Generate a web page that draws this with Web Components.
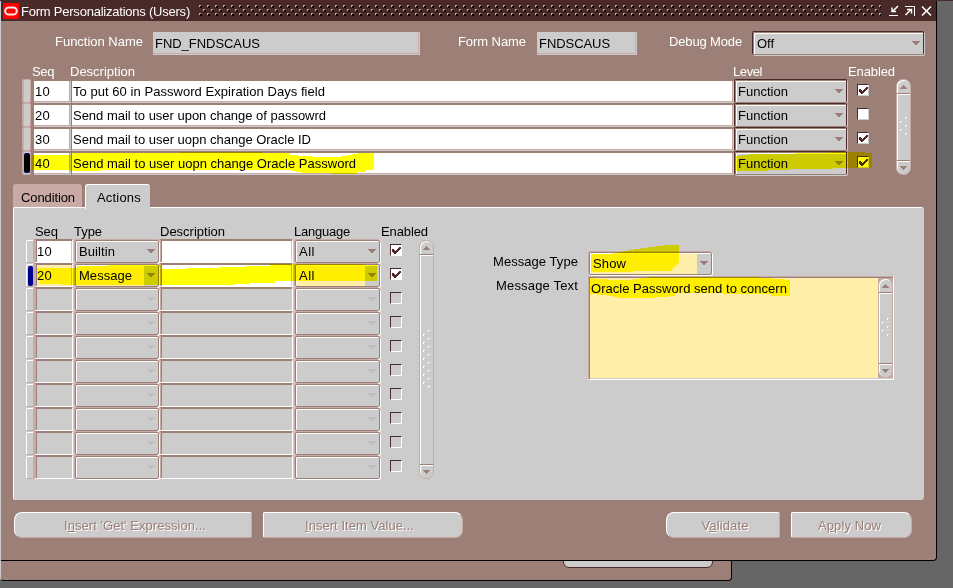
<!DOCTYPE html>
<html lang="en"><head><meta charset="utf-8"><title>Form Personalizations (Users)</title>
<style>html,body{margin:0;width:953px;height:588px;overflow:hidden;background:#666;font:13px/16px "Liberation Sans",Arial,sans-serif;color:#000}</style>
</head><body><personalization-screen></personalization-screen>
<script>
const define=(name,html,setup)=>customElements.define(name,class extends HTMLElement{
  connectedCallback(){
    if(this.shadowRoot)return;
    const root=this.attachShadow({mode:'open'});
    const t=document.createElement('template');
    t.innerHTML=typeof html==='function'?html(this):html;
    root.append(t.content.cloneNode(true));
    if(setup)setup(this,root);
  }
});

/* One line of text tracked out to the width given in w */
define('ui-text','<style>:host{display:inline-block;white-space:pre;flex:none}span{display:inline-block}</style><span><slot></slot></span>',(el,root)=>{
  const w=+el.getAttribute('w');
  if(!w)return;
  const s=root.querySelector('span'),n=el.textContent.length;
  s.style.letterSpacing=((w-s.getBoundingClientRect().width)/n)+'px';
  el.style.width=w+'px';
});

define('ui-field',`<style>
:host{display:block;box-sizing:border-box;height:23px;padding:3px 0 0 1px;background:var(--fill,#fff);border:solid #ccc;border-width:0 1px 1px 0;box-shadow:inset -1px -1px #c9aaa5;overflow:hidden}
:host([inset]){height:24px;margin-left:-1px;padding:4px 0 0 1px;border:solid;border-width:1px 1px 1px 2px;border-color:#9c8077 #fff #fff #c9aaa5;box-shadow:inset 1px 1px #9c8077,inset -1px 0 #ccc;}
:host([inset][empty]){--fill:#ccc}
</style><slot></slot>`);

define('ui-select',`<style>
:host{display:block;box-sizing:border-box;position:relative;height:24px;background:#ccc;border:1px solid var(--edge,#4a2a28);border-radius:2px;border-bottom-color:#9c8077;border-right-color:var(--edge,#4a2a28);box-shadow:inset 1px 1px #9c8077,inset 2px 2px #fff,1px 1px #ccc;padding:4px 0 0 3px}
:host([light]){--edge:#9c8077;height:23px;box-shadow:inset 1px 1px #fff,1px 1px #fff,-1px -1px #c9aaa5;padding-top:3px}
:host([filled]){background:linear-gradient(90deg,#ffeea8 calc(100% - 14px),#ccc 0)}
svg{position:absolute;right:3px;top:9px;display:block}:host([light]) svg{top:8px}
path{fill:#9c8077}:host([empty]) path{fill:#bfbfbf}
</style><slot></slot><svg width="8" height="4" shape-rendering="crispEdges"><path d="M0 0H8V1H7V2H6V3H5V4H3V3H2V2H1V1H0Z"/></svg>`);

define('ui-check',`<style>
:host{display:block;box-sizing:border-box;width:12px;height:12px;background:#fff;border:solid #4a2a28;border-width:1px;border-right-color:#ccc;border-bottom-color:#ccc}
:host([inset]){border-right-color:#fff;border-bottom-color:#fff}:host([empty]){background:#ccc}
svg{display:none}:host([on]) svg{display:block}path{fill:#4a2a28}
</style><svg width="10" height="10" shape-rendering="crispEdges"><path d="M1 4H3V5H4V6H5V5H6V4H7V3H8V2H10V4H9V5H8V6H7V7H6V8H5V9H3V8H2V7H1Z"/></svg>`);

define('ui-scroll',`<style>
:host{display:flex;flex-direction:column;justify-content:space-between;box-sizing:border-box;width:15px;background:#ccc;border:1px solid #c9aaa5;border-radius:7px;box-shadow:inset 1px 1px #fff}
.cap{height:13px;display:grid;place-items:center;border-bottom:1px solid #9c8077;box-shadow:0 1px #fff}
.cap:last-child{border:0;border-top:1px solid #9c8077;box-shadow:inset 0 1px #fff}
svg{display:block;margin:auto}path{fill:#9c8077}.w{fill:#fff}.p{fill:#c9aaa5}
</style><div class="cap"><svg width="7" height="4" shape-rendering="crispEdges"><path d="M3 0H4V1H5V2H6V3H7V4H0V3H1V2H2V1H3Z"/></svg></div><div id="g"></div>
<div class="cap"><svg width="7" height="4" shape-rendering="crispEdges"><path d="M0 0H7V1H6V2H5V3H4V4H3V3H2V2H1V1H0Z"/></svg></div>`,(el,root)=>{
  const n=+el.getAttribute('dots')||5;let s='';
  for(let i=0;i<n;i++){const x=i%2?1:6,y=i*4;
    s+=`<rect class="w" x="${x}" y="${y}" width="2" height="1"/><rect class="w" x="${x}" y="${y+1}" width="1" height="1"/><rect class="p" x="${x+1}" y="${y+1}" width="1" height="1"/>`}
  root.querySelector('#g').innerHTML=`<svg width="9" height="${n*4}" shape-rendering="crispEdges">${s}</svg>`;
});

define('row-mark',`<style>
:host{display:block;box-sizing:border-box;width:9px;height:24px;background:#ccc;border:solid #c9aaa5;border-width:1px 1px 1px 2px;border-radius:2px;box-shadow:inset -1px 0 #ccc}
:host([inset]){width:8px;height:23px;border-width:1px;border-color:#fff #c9aaa5 #c9aaa5 #fff}
i{display:none}:host([current]) i{display:block;height:20px;margin:1px 0 1px 1px;background:#00008f;border-radius:2px}
:host([dark]) i{margin-left:0;background:#000;border-top:1px solid #00008f;border-bottom:1px solid #00008f;height:18px}
</style><i></i>`);

define('ui-button',`<style>
:host{display:block;box-sizing:border-box;height:26px;padding-top:5px;text-align:center;background:#ccc;color:#9c8077;border:1px solid;border-color:#fff #c9aaa5 #c9aaa5 #fff;text-shadow:1px 1px #fff}
:host([side=left]){border-radius:8px 2px 2px 8px}:host([side=right]){border-radius:2px 8px 8px 2px}
</style><slot></slot>`);

define('title-bar',`<style>
:host{display:flex;align-items:center;height:20px;background:#4a2a28;color:#fff;padding-left:2px}
.grip{width:682px;height:12px;margin-left:9px;flex:none}.tools{margin-left:8px;display:block;flex:none}.logo{margin-right:2px;flex:none}slot{display:block;padding-top:2px}
</style><svg class="logo" width="16" height="16"><rect width="16" height="16" fill="#f00"/><rect x="2.2" y="4.4" width="11.6" height="7.2" rx="3.6" fill="none" stroke="#fff" stroke-width="2" opacity=".9"/></svg>
<slot></slot><svg class="grip" shape-rendering="crispEdges"><defs><pattern id="dots" width="8" height="8" patternUnits="userSpaceOnUse"><path fill="#000" d="M1 1h2v2H1zM5 5h2v2H5z"/><path fill="#c9aaa5" d="M0 0h2v1H1v1H0zM4 4h2v1H5v1H4z"/></pattern></defs><rect width="682" height="12" fill="url(#dots)"/></svg>
<svg class="tools" width="46" height="14" fill="none" stroke="#fff"><path stroke-width="1.5" d="M9 2L4 7M3 3.5V7.5H7"/><path d="M0 11.5H9"/><path d="M16 2.5H25.5V12"/><path stroke-width="1.5" d="M16.5 11L22 5.5M18 5.5H22.5V9.5"/><path stroke-width="1.6" d="M33 2.5L42 11.5M42 2.5L33 11.5"/></svg>`);

define('form-header',`<style>
:host{display:flex;height:24px;padding:10px 11px 0 55px;color:#fff}ui-text{margin-top:3px}ui-field,ui-select{color:#000;--fill:#ccc;flex:none}ui-field{margin-top:1px;padding-top:4px}ui-select ui-text,ui-field ui-text{margin-top:0}
</style><ui-text w="88">Function Name</ui-text><ui-field style="width:267px;margin-left:10px;padding-left:2px"><ui-text w="105">FND_FNDSCAUS</ui-text></ui-field>
<ui-text w="68" style="margin-left:38px">Form Name</ui-text><ui-field style="width:100px;margin-left:11px;padding-left:2px"><ui-text w="71">FNDSCAUS</ui-text></ui-field>
<ui-text w="73" style="margin-left:32px">Debug Mode</ui-text><ui-select style="width:172px;margin-left:10px"><ui-text w="17" style="margin-left:1px">Off</ui-text></ui-select>`);

const rules=[['10','To put 60 in Password Expiration Days field',252,1],['20','Send mail to user upon change of passowrd',253,0],['30','Send mail to user uopn change Oracle ID',238,1],['40','Send mail to user uopn change Oracle Password',283,1]];
define('rule-table',`<style>
:host{display:block;padding:9px 0 0 22px}.head,.row{display:grid;grid-template-columns:12px 37px 663px 114px 9px 12px}
.head{color:#fff;height:15px;grid-template-columns:10px 38px 663px 115px 60px}.row{height:24px}.main{display:flex}.main ui-scroll{height:96px;margin-left:27px}
ui-field{margin-top:2px;height:22px;padding-top:3px}.d{margin-left:1px}ui-check{margin-top:5px}ui-select{width:113px}
</style><div class="head"><span></span><ui-text w="22">Seq</ui-text><ui-text w="65">Description</ui-text><ui-text w="29">Level</ui-text><ui-text w="47">Enabled</ui-text></div>
<div class="main"><div>${rules.map((r,i)=>`<div class="row"><row-mark ${i==3?'current dark':''}></row-mark><ui-field><ui-text w="15">${r[0]}</ui-text></ui-field><ui-field class="d"><ui-text w="${r[2]}">${r[1]}</ui-text></ui-field><ui-select><ui-text w="50">Function</ui-text></ui-select><span></span><ui-check ${r[3]?'on':''}></ui-check></div>`).join('')}</div><ui-scroll></ui-scroll></div>`);

define('form-tabs',`<style>
:host{display:flex;padding:9px 0 0 13px;gap:3px;height:23px}div{box-sizing:border-box;height:23px;padding:6px 0 0 8px;border-radius:3px 3px 0 0}
.a{width:69px;background:#c9aaa5}.b{position:relative;z-index:1;width:65px;height:25px;background:#ccc;border:solid #fff;border-width:1px 0 0 1px;padding:5px 0 0 11px}
</style><div class="a"><ui-text w="54">Condition</ui-text></div><div class="b"><ui-text w="44">Actions</ui-text></div>`);

define('action-table',`<style>
:host{display:block;padding-top:16px}.head{display:grid;height:15px;grid-template-columns:39px 86px 134px 87px 50px;padding-left:9px}
.main{display:flex}.row{height:24px;display:grid;grid-template-columns:8px 40px 85px 135px 86px 9px 12px}ui-scroll{height:239px;margin:1px 0 0 18px}
ui-select{width:84px;margin:1px 0 0 1px}ui-select.l{width:85px}ui-check{margin-top:5px;margin-left:1px}.s{width:39px;margin-left:0}.d{width:134px;margin-left:0}.cur.s{--fill:#ffeea8}row-mark{margin-top:1px}
</style><div class="head"><ui-text w="23">Seq</ui-text><ui-text w="28">Type</ui-text><ui-text w="65">Description</ui-text><ui-text w="56">Language</ui-text><ui-text w="47">Enabled</ui-text></div>
<div class="main"><div>${Array.from({length:10},(_,i)=>{const e=i>1?'empty':'',f=i==1?'filled':'';return `<div class="row"><row-mark inset ${i==1?'current':''}></row-mark><ui-field inset ${e} class="s ${i==1?'cur':''}">${i<2?`<ui-text w="15">${i?20:10}</ui-text>`:''}</ui-field><ui-select light ${e} ${f}>${i<2?`<ui-text w="${i?53:36}">${i?'Message':'Builtin'}</ui-text>`:''}</ui-select><ui-field inset ${e} class="d"></ui-field><ui-select light class="l" ${e} ${f}>${i<2?'<ui-text w="16">All</ui-text>':''}</ui-select><span></span><ui-check inset ${i<2?'on':'empty'}></ui-check></div>`}).join('')}</div><ui-scroll dots="15"></ui-scroll></div>`);

define('message-form',`<style>
:host{display:grid;grid-template-columns:86px 306px;column-gap:10px;row-gap:1px;padding-top:44px;align-content:start;justify-items:start}
.lab{justify-self:end;margin-top:2px}ui-select{width:123px}ui-select{margin-left:1px}
.area{box-sizing:border-box;width:306px;height:104px;display:flex;justify-content:space-between;background:#ffeea8;border:solid;border-width:1px 1px 1px 1px;border-color:#c9aaa5 #fff #fff #c9aaa5;box-shadow:inset 1px 1px #9c8077,inset 0 -1px #ccc;padding:1px 0}
.area ui-text{margin:3px 0 0 2px}.bar{display:flex;background:#c9aaa5}.bar ui-scroll{height:100px;border-color:#c9aaa5}
</style><ui-text class="lab" w="85">Message Type</ui-text><ui-select light filled><ui-text w="33">Show</ui-text></ui-select>
<ui-text class="lab" w="82">Message Text</ui-text><div class="area"><ui-text w="196">Oracle Password send to concern</ui-text><div class="bar"><ui-scroll></ui-scroll></div></div>`);

/* Marker pen strokes laid over the rows */
define('marker-strokes',`<style>:host{position:absolute;inset:0;mix-blend-mode:multiply;z-index:5;pointer-events:none}svg{display:block}</style>
<svg width="936" height="560" fill="#ff0" shape-rendering="crispEdges"><path d="M32 155H71V153H180V152H262V153H290V155L320 157H340L354 154L362 153H374V170H366V172H357V174H331V173H305L288 170H100V171H70V170H32Z"/>
<path d="M736 156L755 154H795V153H830V152H865V153H872V168H833V169H800L758 171H736Z"/>
<path d="M37 268H77V266H108V265H161V269H188V268H220V267H245V266H270V264H364V265H377V281H294V281H275V283H250V284H235V285H161V285H77V285H61V284H40V279H37Z"/>
<path d="M591 254H610L630 250L658 246L669 245H679V262L670 271H650L615 272H591Z"/>
<path d="M590 278L612 280H630L650 277H760V278H774V279H785V280H790V296H771V294L675 293V296L650 298H621L605 295L590 294Z"/></svg>`);

define('personalization-screen',`<style>
:host{display:block;position:relative;width:953px;height:588px;overflow:hidden;border-top:1px solid #4a2a28;box-sizing:border-box}
.back{position:absolute;left:0;top:500px;width:732px;height:80px;box-sizing:border-box;background:#9c8077;border:1px solid #000;border-left-color:#ccc;border-radius:0 0 4px 4px}
.peek{position:absolute;left:562px;top:54px;width:150px;height:12px;box-sizing:border-box;background:#ccc;border:1px solid #4a2a28;border-radius:0 0 6px 6px}
.win{position:absolute;left:0;top:-1px;width:937px;height:561px;box-sizing:border-box;background:#9c8077;border:solid;border-width:1px 1px 1px 1px;border-color:#4a2a28 #000 #000 #ccc;border-radius:2px 2px 4px 2px}
.win>*{margin-left:-1px}title-bar.t{margin-left:0;padding-left:2px}marker-strokes{top:-1px!important;left:0}
.panel{box-sizing:border-box;width:911px;height:293px;margin-left:12px;background:#ccc;border:solid #fff;border-width:1px 0 0 1px;border-radius:2px 3px 3px 2px;display:flex;padding-left:12px}
message-form{margin-left:58px}.buttons{display:flex;padding:12px 0 0 14px}ui-button{flex:none}
</style><div class="back"><div class="peek"></div></div>
<div class="win"><title-bar class="t"><ui-text w="169">Form Personalizations (Users)</ui-text></title-bar>
<form-header></form-header><rule-table></rule-table><form-tabs></form-tabs>
<div class="panel"><action-table></action-table><message-form></message-form></div>
<div class="buttons"><ui-button side="left" style="width:238px"><ui-text w="142" style="margin-left:4px">I<u>n</u>sert 'Get' Expression...</ui-text></ui-button><ui-button side="right" style="width:200px;margin-left:11px"><ui-text w="109" style="margin-right:7px"><u>I</u>nsert Item Value...</ui-text></ui-button><ui-button side="left" style="width:114px;margin-left:203px"><ui-text w="47" style="margin-left:4px">V<u>a</u>lidate</ui-text></ui-button><ui-button side="right" style="width:121px;margin-left:11px"><ui-text w="63" style="margin-right:4px">A<u>p</u>ply Now</ui-text></ui-button></div>
<marker-strokes></marker-strokes></div>`);
</script></body></html>
